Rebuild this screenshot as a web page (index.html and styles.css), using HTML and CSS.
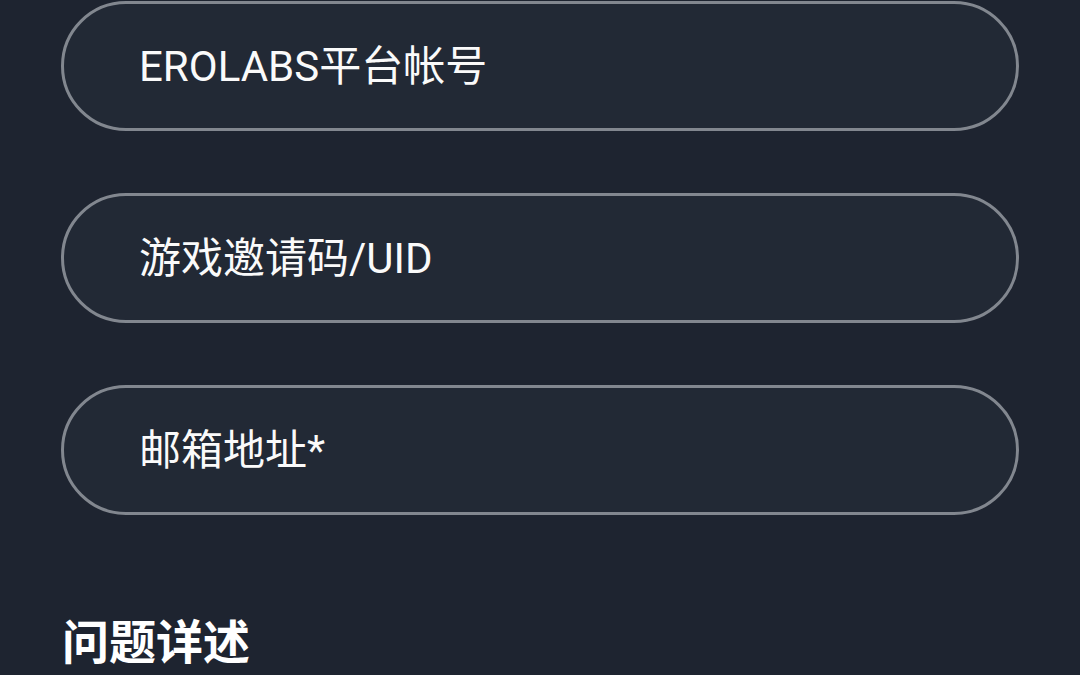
FILE: index.html
```html
<!DOCTYPE html>
<html lang="zh">
<head>
<meta charset="utf-8">
<link rel="stylesheet" href="styles.css">
</head>
<body>
<div class="form">
  <div class="field">EROLABS平台帐号</div>
  <div class="field">游戏邀请码/UID</div>
  <div class="field">邮箱地址*</div>
  <h2 class="section-title">问题详述</h2>
</div>
</body>
</html>
```
FILE: styles.css
```css
html, body {
  margin: 0;
  padding: 0;
  background: #1e2430;
}
body {
  font-family: Roboto, "Noto Sans CJK SC", sans-serif;
  color: #ffffff;
}
.form {
  padding: 1px 61px 0 61px;
  display: flex;
  flex-direction: column;
  gap: 62px;
}
.field {
  box-sizing: border-box;
  height: 130px;
  border: 3px solid #82878f;
  border-radius: 65px;
  background: #222935;
  display: flex;
  align-items: center;
  padding-left: 75px;
  padding-bottom: 7px;
  font-size: 42px;
  color: #fafafa;
}
.section-title {
  margin: 38px 0 0 1px;
  font-size: 47px;
  font-weight: 700;
  line-height: 56px;
  color: #ffffff;
}
```
